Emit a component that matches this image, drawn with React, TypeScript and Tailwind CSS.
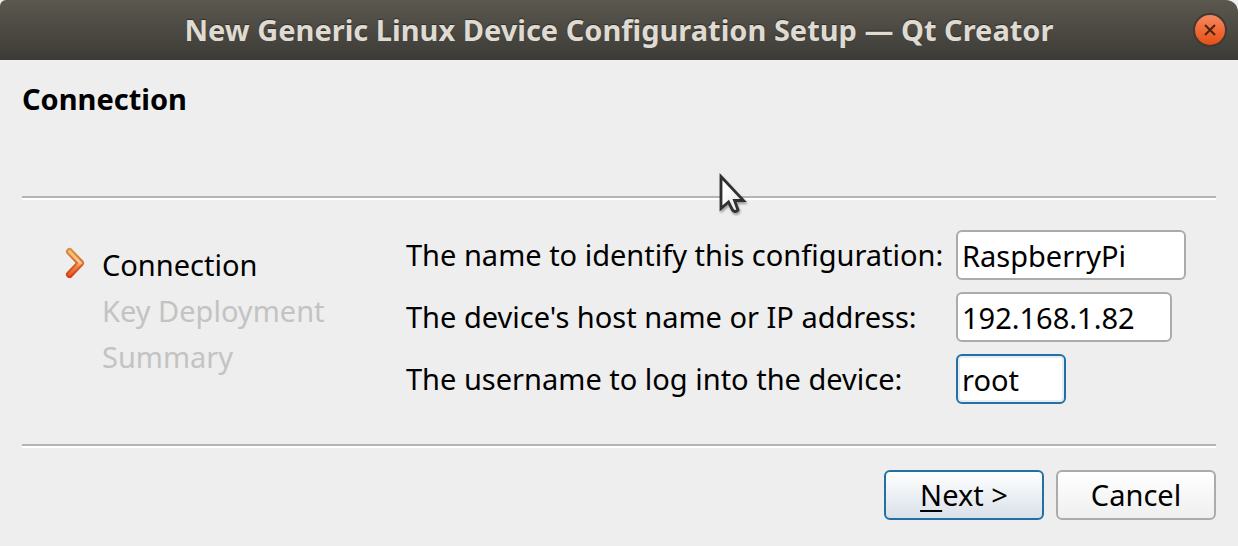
import { useState } from "react";

const steps = ["Connection", "Key Deployment", "Summary"];

function StepArrow() {
  return (
    <svg className="h-8 w-6" viewBox="0 0 24 32" fill="none">
      <defs>
        <linearGradient id="arrow" gradientUnits="userSpaceOnUse" x1="0" y1="2" x2="0" y2="31">
          <stop offset="0" stopColor="#d99448" />
          <stop offset="0.5" stopColor="#d66c30" />
          <stop offset="1" stopColor="#d23c12" />
        </linearGradient>
        <linearGradient id="arrowLight" gradientUnits="userSpaceOnUse" x1="0" y1="2" x2="0" y2="31">
          <stop offset="0" stopColor="#f6bd68" />
          <stop offset="0.5" stopColor="#fbc684" />
          <stop offset="0.62" stopColor="#f08a4c" />
          <stop offset="1" stopColor="#e8521a" />
        </linearGradient>
      </defs>
      <path
        d="M4.500 5.500L15.500 17L4.500 28.500"
        stroke="url(#arrow)"
        strokeWidth="7"
        strokeLinecap="round"
        strokeLinejoin="round"
      />
      <path
        d="M4.500 5.500L15.500 17L4.500 28.500"
        stroke="url(#arrowLight)"
        strokeWidth="3"
        strokeLinecap="round"
      />
    </svg>
  );
}

function Pointer() {
  return (
    <svg
      className="absolute left-[718px] top-[172px] h-[44px] w-[30px] drop-shadow-[1px_2px_1px_rgba(0,0,0,0.35)]"
      viewBox="0 0 30 44"
    >
      <defs>
        <linearGradient id="pointer" x1="0" y1="0" x2="1" y2="1">
          <stop offset="0.3" stopColor="#fff" />
          <stop offset="1" stopColor="#dcdcdc" />
        </linearGradient>
      </defs>
      <path
        d="M3 4.500V36.500L10.500 30L14.500 38Q17 41 20 38L16.500 28.500H25.500Z"
        fill="url(#pointer)"
        stroke="#303030"
        strokeWidth="2.800"
      />
    </svg>
  );
}

export default function App() {
  const [name, setName] = useState("RaspberryPi");
  const [host, setHost] = useState("192.168.1.82");
  const [user, setUser] = useState("root");

  return (
    <div className="relative min-h-screen w-full bg-[#eeeeee] font-['Noto_Sans',sans-serif] text-[29px] leading-[46px] text-black">
      <header className="flex h-[60px] items-center rounded-tl-md rounded-tr-xl bg-linear-to-b from-[#5b584f] to-[#3d3b36] pr-[11px] pl-[45px]">
        <h1 className="flex-1 text-center font-bold whitespace-nowrap text-[#dfdbd2] [text-shadow:0_-1px_1px_#2c2b28]">
          New Generic Linux Device Configuration Setup — Qt Creator
        </h1>
        <button
          aria-label="Close"
          className="flex h-[34px] w-[34px] items-center justify-center rounded-full border-2 border-[#403a34] bg-linear-to-b from-[#f58a63] via-[#f06a36] to-[#e4500f]"
        >
          <svg className="h-3 w-3" viewBox="0 0 12 12">
            <path d="M1 1L11 11M11 1L1 11" stroke="#4a2410" strokeWidth="2" />
          </svg>
        </button>
      </header>

      <main className="px-[22px]">
        <h2 className="h-[136px] pt-4 font-bold">Connection</h2>
        <hr className="h-1 border-t-2 border-b-2 border-t-[#b4b4b4] border-b-white" />

        <div className="flex h-[244px] pt-[30px]">
          <ol className="w-[384px] shrink-0 pt-3">
            {steps.map((step, i) => (
              <li key={step} className="flex">
                <span className="w-[80px] shrink-0 pt-1 pl-[43px]">
                  {i === 0 && <StepArrow />}
                </span>
                <span className={i === 0 ? "text-black" : "text-[#c3c3c3]"}>{step}</span>
              </li>
            ))}
          </ol>

          <form className="grid auto-rows-[50px] grid-cols-[538px_auto] content-start items-center gap-x-3 gap-y-3">
            <label htmlFor="name" className="whitespace-nowrap">
              The name to identify this configuration:
            </label>
            <input
              id="name"
              value={name}
              onChange={(e) => setName(e.target.value)}
              className="h-[50px] w-[230px] rounded-md border-2 border-[#ababab] bg-white px-1 outline-none"
            />
            <label htmlFor="host" className="whitespace-nowrap">
              The device's host name or IP address:
            </label>
            <input
              id="host"
              value={host}
              onChange={(e) => setHost(e.target.value)}
              className="h-[50px] w-[216px] rounded-md border-2 border-[#ababab] bg-white px-1 outline-none"
            />
            <label htmlFor="user" className="whitespace-nowrap">
              The username to log into the device:
            </label>
            <input
              id="user"
              value={user}
              onChange={(e) => setUser(e.target.value)}
              className="h-[50px] w-[110px] rounded-md border-2 border-[#2270a5] bg-white px-1 inset-ring-2 inset-ring-[#e6eef4] outline-none"
            />
          </form>
        </div>

        <hr className="h-1 border-t-2 border-b-2 border-t-[#b4b4b4] border-b-white" />
        <div className="flex justify-end gap-3 pt-[22px]">
          <button className="h-[50px] w-[160px] rounded-md border-2 border-[#2270a5] bg-linear-to-b from-white to-[#d9e1e8]">
            <span className="underline decoration-2 underline-offset-4">N</span>ext &gt;
          </button>
          <button className="h-[50px] w-[160px] rounded-md border-2 border-[#ababab] bg-linear-to-b from-white to-[#efefef]">
            Cancel
          </button>
        </div>
      </main>

      <Pointer />
    </div>
  );
}
